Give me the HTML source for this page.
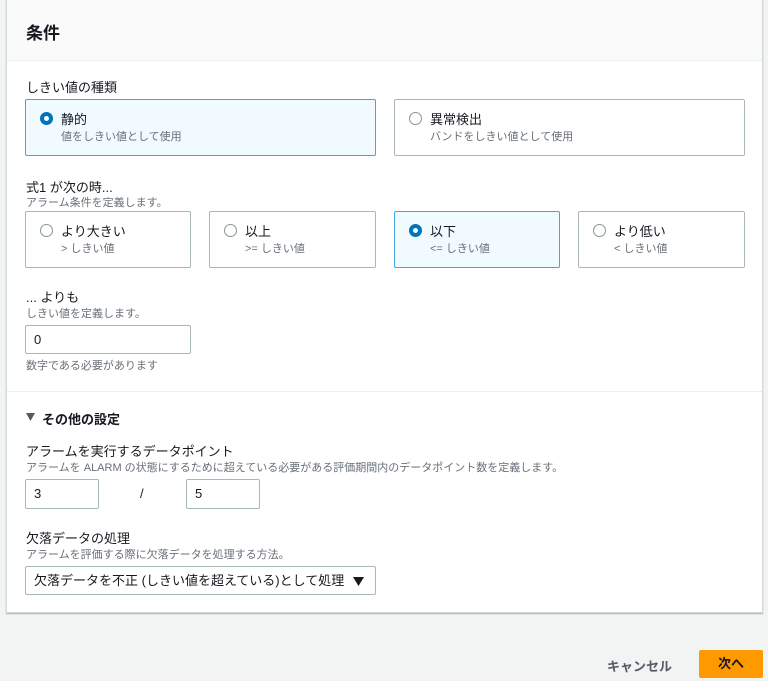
<!DOCTYPE html>
<html><head><meta charset="utf-8">
<style>
*{box-sizing:border-box;margin:0;padding:0}
body{width:768px;height:681px;background:#f2f3f3;font-family:"Liberation Sans","Noto Sans CJK JP",sans-serif;color:#16191f;position:relative;overflow:hidden}
.a{position:absolute;white-space:nowrap}
.panel{position:absolute;left:6px;top:-1px;width:757px;height:614px;background:#fff;border:1px solid #d5dbdb;box-shadow:0 1px 1px rgba(0,28,36,.3)}
.hdr{position:absolute;left:0;top:0;width:100%;height:61px;background:#fafafa;border-bottom:1px solid #eaeded}
.lbl{font-size:13px;color:#16191f}
.sub{font-size:11px;color:#687078}
.card{position:absolute;border:1px solid #aab7b8;border-radius:2px;background:#fff}
.card.sel{border-color:#44a6dd;background:#f1faff}
.rad{position:absolute;width:13px;height:13px;border-radius:50%;border:1.5px solid #879596;background:#fff}
.sel .rad{border:4px solid #0073bb}
.ct{position:absolute;font-size:13px;color:#16191f;white-space:nowrap}
.cs{position:absolute;font-size:11px;color:#687078;white-space:nowrap}
.inp{position:absolute;border:1px solid #aab7b8;border-radius:2px;background:#fff;font-size:13px;padding-left:8px;line-height:27px}
</style></head><body>
<div class="panel">
<div class="hdr"></div>
</div>
<div class="a" style="left:26px;top:19px;font-size:17px;font-weight:bold">条件</div>

<div class="a lbl" style="left:26px;top:77px">しきい値の種類</div>
<div class="card sel" style="left:25px;top:99px;width:351px;height:57px"><div class="rad" style="left:14px;top:12px"></div><div class="ct" style="left:35px;top:9px">静的</div><div class="cs" style="left:35px;top:28px">値をしきい値として使用</div></div>
<div class="card" style="left:394px;top:99px;width:351px;height:57px"><div class="rad" style="left:14px;top:12px"></div><div class="ct" style="left:35px;top:9px">異常検出</div><div class="cs" style="left:35px;top:28px">バンドをしきい値として使用</div></div>

<div class="a lbl" style="left:26px;top:177px">式1 が次の時...</div>
<div class="a sub" style="left:26px;top:194px">アラーム条件を定義します。</div>
<div class="card" style="left:25px;top:211px;width:166px;height:57px"><div class="rad" style="left:14px;top:12px"></div><div class="ct" style="left:35px;top:9px">より大きい</div><div class="cs" style="left:35px;top:28px">&gt; しきい値</div></div>
<div class="card" style="left:209px;top:211px;width:167px;height:57px"><div class="rad" style="left:14px;top:12px"></div><div class="ct" style="left:35px;top:9px">以上</div><div class="cs" style="left:35px;top:28px">&gt;= しきい値</div></div>
<div class="card sel" style="left:394px;top:211px;width:166px;height:57px"><div class="rad" style="left:14px;top:12px"></div><div class="ct" style="left:35px;top:9px">以下</div><div class="cs" style="left:35px;top:28px">&lt;= しきい値</div></div>
<div class="card" style="left:578px;top:211px;width:167px;height:57px"><div class="rad" style="left:14px;top:12px"></div><div class="ct" style="left:35px;top:9px">より低い</div><div class="cs" style="left:35px;top:28px">&lt; しきい値</div></div>

<div class="a lbl" style="left:26px;top:287px">... よりも</div>
<div class="a sub" style="left:26px;top:305px">しきい値を定義します。</div>
<div class="inp" style="left:25px;top:325px;width:166px;height:29px">0</div>
<div class="a sub" style="left:26px;top:357px">数字である必要があります</div>

<div class="a" style="left:7px;top:391px;width:755px;height:1px;background:#eaeded"></div>
<svg class="a" style="left:26px;top:413px" width="9" height="8"><path d="M0 0H9L4.5 8Z" fill="#545b64"/></svg>
<div class="a" style="left:42px;top:409px;font-size:13px;font-weight:bold">その他の設定</div>

<div class="a lbl" style="left:26px;top:441px">アラームを実行するデータポイント</div>
<div class="a sub" style="left:26px;top:459px">アラームを ALARM の状態にするために超えている必要がある評価期間内のデータポイント数を定義します。</div>
<div class="inp" style="left:25px;top:479px;width:74px;height:30px">3</div>
<div class="a" style="left:140px;top:486px;font-size:13px">/</div>
<div class="inp" style="left:186px;top:479px;width:74px;height:30px">5</div>

<div class="a lbl" style="left:26px;top:528px">欠落データの処理</div>
<div class="a sub" style="left:26px;top:546px">アラームを評価する際に欠落データを処理する方法。</div>
<div class="inp" style="left:25px;top:566px;width:351px;height:29px">欠落データを不正 (しきい値を超えている)として処理<svg style="position:absolute;right:11px;top:10px" width="11" height="9"><path d="M0 0H11L5.5 9Z" fill="#16191f"/></svg></div>

<div class="a" style="left:607px;top:656px;font-size:13px;font-weight:bold;color:#545b64">キャンセル</div>
<div class="a" style="left:699px;top:650px;width:64px;height:28px;background:#ff9900;border-radius:2px;font-size:13px;font-weight:bold;line-height:28px;text-align:center;color:#16191f">次へ</div>
</body></html>
